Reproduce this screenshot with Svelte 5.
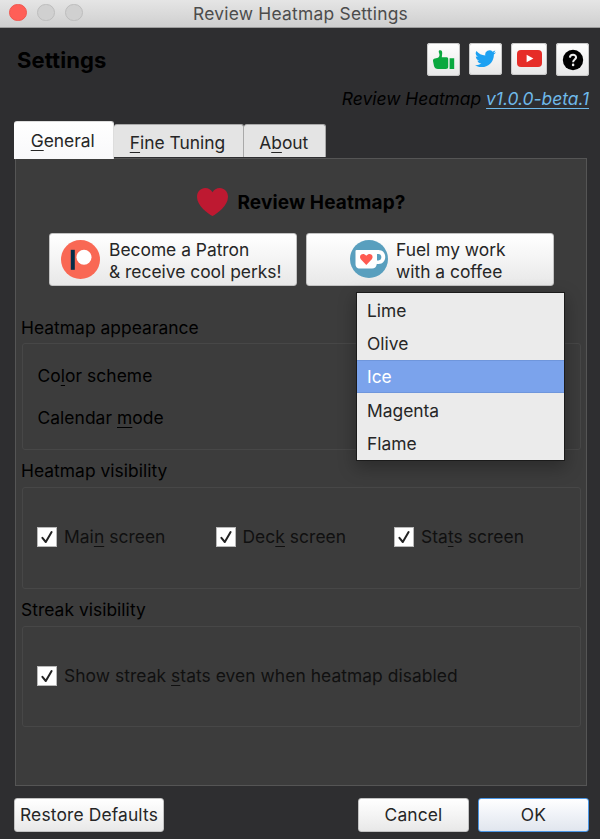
<script>
  const tabs = [
    { id: 'general', pre: '', key: 'G', post: 'eneral' },
    { id: 'tuning', pre: '', key: 'F', post: 'ine Tuning' },
    { id: 'about', pre: 'A', key: 'b', post: 'out' }
  ];
  const schemes = ['Lime', 'Olive', 'Ice', 'Magenta', 'Flame'];
  const screens = [
    { pre: 'Mai', key: 'n', post: ' screen' },
    { pre: 'Dec', key: 'k', post: ' screen' },
    { pre: 'Sta', key: 't', post: 's screen' }
  ];
  let active = $state('general');
  let scheme = $state('Ice');
</script>

{#snippet check()}
  <span class="box">
    <svg width="20" height="20" viewBox="0 0 20 20"><path d="M5.4 10.8 L8.8 15 L14.6 5" fill="none" stroke="#222" stroke-width="2" stroke-linecap="round" stroke-linejoin="round" /></svg>
  </span>
{/snippet}

<div class="window">
  <header class="titlebar">
    <span class="dot close"></span><span class="dot"></span><span class="dot"></span>
    <span class="title">Review Heatmap Settings</span>
  </header>

  <div class="head">
    <h1>Settings</h1>
    <div class="links">
      <button class="ico" aria-label="Rate">
        <svg width="33" height="33" viewBox="0 0 33 33"><path fill="#0aa83f" d="M12.6 7.3 C14.5 6.8 15.3 8.2 15.2 10.2 L14.8 14.2 H19.6 C20.8 14.2 21.2 15 21.2 16 V23.5 C21.2 25.3 20.4 26 18.8 26 H11 C8.8 26 7.6 24.8 7 23 L6 18 C5.8 16.6 6.6 15.6 8 15.4 L11 14.8 C12.8 13.4 12.8 12 12 9.8 C11.6 8.6 11.6 7.6 12.6 7.3 Z M22.6 15.3 H27.2 V26 H22.6 Z" /></svg>
      </button>
      <button class="ico short" aria-label="Twitter">
        <svg width="21" height="17" viewBox="0 1.9 24 19.6" preserveAspectRatio="none"><path fill="#1da1f2" d="M23.95 4.57a10 10 0 0 1-2.82.77 4.96 4.96 0 0 0 2.16-2.72c-.95.55-2 .95-3.13 1.18a4.92 4.92 0 0 0-8.38 4.48C7.69 8.1 4.07 6.13 1.64 3.16a4.92 4.92 0 0 0 1.52 6.57 4.9 4.9 0 0 1-2.23-.61v.06a4.92 4.92 0 0 0 3.95 4.83 5 5 0 0 1-2.21.08 4.94 4.94 0 0 0 4.6 3.42A9.87 9.87 0 0 1 0 19.54a13.99 13.99 0 0 0 7.56 2.21c9.05 0 14-7.5 14-13.98 0-.21 0-.42-.02-.63a9.94 9.94 0 0 0 2.46-2.55z" /></svg>
      </button>
      <button class="ico short wide" aria-label="YouTube">
        <svg width="25" height="17" viewBox="0 0 25 17"><rect width="25" height="17" rx="4" fill="#e62d28" /><path d="M9.6 4.8 L16.4 8.5 L9.6 12.2 Z" fill="#fff" /></svg>
      </button>
      <button class="ico" aria-label="Help">
        <svg width="22" height="22" viewBox="0 0 22 22"><circle cx="11" cy="11" r="10.2" fill="#000" /><path d="M7.9 8.6 C8 4.8 14.2 4.9 14.1 8.4 C14 10.5 11.1 10.6 11.1 13.2" fill="none" stroke="#eee" stroke-width="2" /><circle cx="11.1" cy="15.9" r="1.3" fill="#eee" /></svg>
      </button>
    </div>
  </div>
  <div class="version"><span class="name">Review Heatmap</span> <a href="#release">v1.0.0-beta.1</a></div>

  <nav class="tabs">
    {#each tabs as t}
      <button class="tab {t.id}" class:active={active === t.id} onclick={() => (active = t.id)}><span>{t.pre}<u>{t.key}</u>{t.post}</span></button>
    {/each}
  </nav>

  <main class="panel">
    <div class="support">
      <svg width="31" height="28" viewBox="0 0 31 28"><path fill="#be1931" d="M15.5 28 C11 25.5 0 18 0 8.7 C0 3.8 3.7 0 8.3 0 C11.4 0 14.1 1.7 15.5 4.2 C16.9 1.7 19.6 0 22.7 0 C27.3 0 31 3.8 31 8.7 C31 18 20 25.5 15.5 28 Z" /></svg>
      <span>Review Heatmap?</span>
    </div>
    <div class="donate">
      <button class="push big patron">
        <svg width="39" height="39" viewBox="0 0 39 39"><circle cx="19.5" cy="19.5" r="19.5" fill="#f96854" /><rect x="9.8" y="9.8" width="4" height="20" fill="#052d49" /><circle cx="23" cy="17.3" r="7.5" fill="#fff" /></svg>
        <span><span class="ln">Become a Patron</span><span class="ln">&amp; receive cool perks!</span></span>
      </button>
      <button class="push big coffee">
        <svg width="38" height="38" viewBox="0 0 38 38"><circle cx="19" cy="19" r="19" fill="#599fbe" /><path d="M6.5 10 H28.5 C37.5 10 37.5 24 28.5 24 H26.8 C26.3 27.2 24.8 28.6 22 28.6 H10 C6.7 28.6 5.5 26.8 5.5 23.5 V11 Q5.5 10 6.5 10 Z" fill="#fff" /><path d="M27 14 H28.5 C32.3 14 32.3 20.4 28.5 20.4 H27 Z" fill="#599fbe" /><path d="M16.3 25 L10.8 19.2 C8.2 15.8 12.6 11.8 16.3 15.7 C20 11.8 24.4 15.8 21.8 19.2 Z" fill="#ff5b52" /></svg>
        <span><span class="ln">Fuel my work</span><span class="ln">with a coffee</span></span>
      </button>
    </div>

    <h2 class="appear">Heatmap appearance</h2>
    <section class="group options">
      <div class="row"><span>Co<u>l</u>or scheme</span>
        <ul class="menu">
          {#each schemes as s}
            <li class:selected={scheme === s}><button onclick={() => (scheme = s)}>{s}</button></li>
          {/each}
        </ul>
      </div>
      <div class="row"><span>Calendar <u>m</u>ode</span></div>
    </section>

    <h2>Heatmap visibility</h2>
    <section class="group screens">
      {#each screens as s}
        <label>{@render check()}<span>{s.pre}<u>{s.key}</u>{s.post}</span></label>
      {/each}
    </section>

    <h2>Streak visibility</h2>
    <section class="group streak">
      <label>{@render check()}<span>Show streak <u>s</u>tats even when heatmap disabled</span></label>
    </section>
  </main>

  <footer>
    <button class="push restore">Restore Defaults</button>
    <button class="push cancel">Cancel</button>
    <button class="push ok">OK</button>
  </footer>
</div>

<style>
  :global(body) { margin: 0; background: #2e2e30; }
  .window {
    width: 600px; height: 839px; box-sizing: border-box; overflow: hidden;
    display: flex; flex-direction: column; background: #2e2e30; color: #000;
    font: 17.4px/22px Inter, "Liberation Sans", sans-serif;
  }
  button { font: inherit; color: #262626; padding: 0; border: 0; background: none; white-space: nowrap; }
  h1, h2, ul { margin: 0; padding: 0; font: inherit; }
  u { text-decoration: underline; text-decoration-thickness: 1px; text-underline-offset: 3px; text-decoration-skip-ink: none; }

  .titlebar {
    height: 28px; box-sizing: border-box; flex: none; display: flex; align-items: center;
    padding: 0 0 2px 9px; gap: 10.5px; background: linear-gradient(#e5e5e5, #cfcfcf); border-bottom: 1px solid #9c9c9c;
  }
  .dot { width: 17.5px; height: 17.5px; box-sizing: border-box; border: 1px solid #bdbdbd; border-radius: 50%; background: #d0d0d0; }
  .dot.close { background: #ff5f57; border-color: #f0564f; }
  .title { margin-left: 100px; padding-top: 2px; color: #4c4c4c; white-space: nowrap; letter-spacing: .24px; }

  .head { display: flex; justify-content: space-between; height: 49px; flex: none; padding: 15px 11px 0 17px; box-sizing: border-box; }
  h1 { font-weight: 700; font-size: 22px; line-height: 34px; letter-spacing: .1px; }
  .links { display: flex; gap: 9px; align-items: flex-start; }
  .ico {
    width: 33px; height: 33px; box-sizing: border-box; display: flex; align-items: center; justify-content: center;
    border-radius: 3px; background: linear-gradient(#fff, #e7e7e7); box-shadow: inset 0 0 0 1px #c9c9c9;
  }
  .short { height: 32px; padding-bottom: 1px; }
  .wide { width: 36px; }
  .version { height: 44px; flex: none; padding: 11px 11px 0 0; box-sizing: border-box; text-align: right; font-style: italic; white-space: nowrap; }
  .version a { color: #6fb9e9; text-decoration: underline; text-decoration-thickness: 1px; text-underline-offset: 3px; text-decoration-skip-ink: none; }

  .tabs { display: flex; align-items: flex-start; height: 37px; flex: none; padding-left: 14px; z-index: 1; }
  .tab { height: 33px; margin-top: 3px; box-sizing: border-box; background: #e4e4e4; border: 1px solid #a9a9a9; border-width: 1px 1px 0 0; border-radius: 3px 3px 0 0; line-height: 35px; }
  .tab span { margin-right: 1px; }
  .tab.active { height: 38px; margin-top: 0; background: linear-gradient(#fff, #f8f8fa); border-color: #ddd; line-height: 38px; }
  .tab.general { width: 99.5px; }
  .tab.tuning { width: 130px; }
  .tab.about { width: 82.5px; }

  .panel {
    height: 628px; flex: none; margin: 0 13px 0 15px; box-sizing: border-box; padding: 0 5px 0 6px;
    border: 1px solid #555; background: #3c3c3c; display: flex; flex-direction: column;
  }
  .support { height: 56px; margin-top: 15px; display: flex; justify-content: center; align-items: center; gap: 9px; font-size: 19px; font-weight: 700; letter-spacing: .14px; }
  .support svg { margin-top: -1px; }
  .support span { padding-top: 1px; }
  .donate { display: flex; gap: 9px; padding-left: 27px; margin-top: 3px; }
  .push {
    height: 34px; box-sizing: border-box; border: 1px solid #c2c2c2; border-radius: 3px; white-space: nowrap; letter-spacing: .15px;
    background: linear-gradient(#fff, #f4f4f4 50%, #e8e8e8);
  }
  .big { width: 248px; height: 53px; display: flex; align-items: center; justify-content: flex-start; padding-left: 11px; gap: 9px; text-align: left; letter-spacing: 0; }
  .coffee { padding-left: 43px; gap: 8px; }
  .big svg { flex: none; margin-top: -1px; }
  .ln { display: block; width: max-content; }
  .big > span { padding-top: 2px; }

  h2 { height: 22px; line-height: 22px; margin: 10px 0 5px -1px; letter-spacing: .04px; }
  .appear { margin-top: 30px; padding-top: 1px; margin-bottom: 4px; }
  .group { box-sizing: border-box; border: 1px solid #474747; border-radius: 3px; flex: none; letter-spacing: .06px; }
  .options { height: 107px; padding: 11px 14.5px; }
  .row { height: 42px; display: flex; align-items: center; position: relative; }
  .screens { height: 102px; display: flex; align-items: center; }
  .screens label { width: 178.5px; flex: none; }
  .screens, .streak { padding-left: 14px; padding-bottom: 2px; }
  .streak { height: 101px; display: flex; align-items: center; }
  label { display: flex; align-items: center; gap: 7px; white-space: nowrap; color: #101010; }
  .box { width: 20px; height: 20px; box-sizing: border-box; background: #fff; box-shadow: inset 0 0 0 1px #b9b9b9; display: flex; }
  .menu {
    position: absolute; left: 319.5px; top: -62px; width: 207px; list-style: none; z-index: 2;
    background: #ebebeb; outline: 1px solid #1b1b1b; box-shadow: 0 6px 16px 2px rgba(0, 0, 0, .28);
  }
  .menu li { height: 33.4px; display: flex; padding-left: 10px; align-items: center; }
  .menu li button { padding-top: 2px; }
  .menu .selected { background: #7ba3ec; box-shadow: inset 0 1px #6f96dc, inset 0 -1px #6f96dc; }
  .menu .selected button { color: #fff; }

  footer { display: flex; margin-top: 12px; padding: 0 11px 0 14px; }
  .restore { width: 150px; margin-right: auto; }
  .cancel { width: 111px; margin-right: 9px; }
  .ok { width: 111px; border-color: #4b97e6; background: linear-gradient(#fff, #eff2f7 50%, #e1e6ee); }
</style>
